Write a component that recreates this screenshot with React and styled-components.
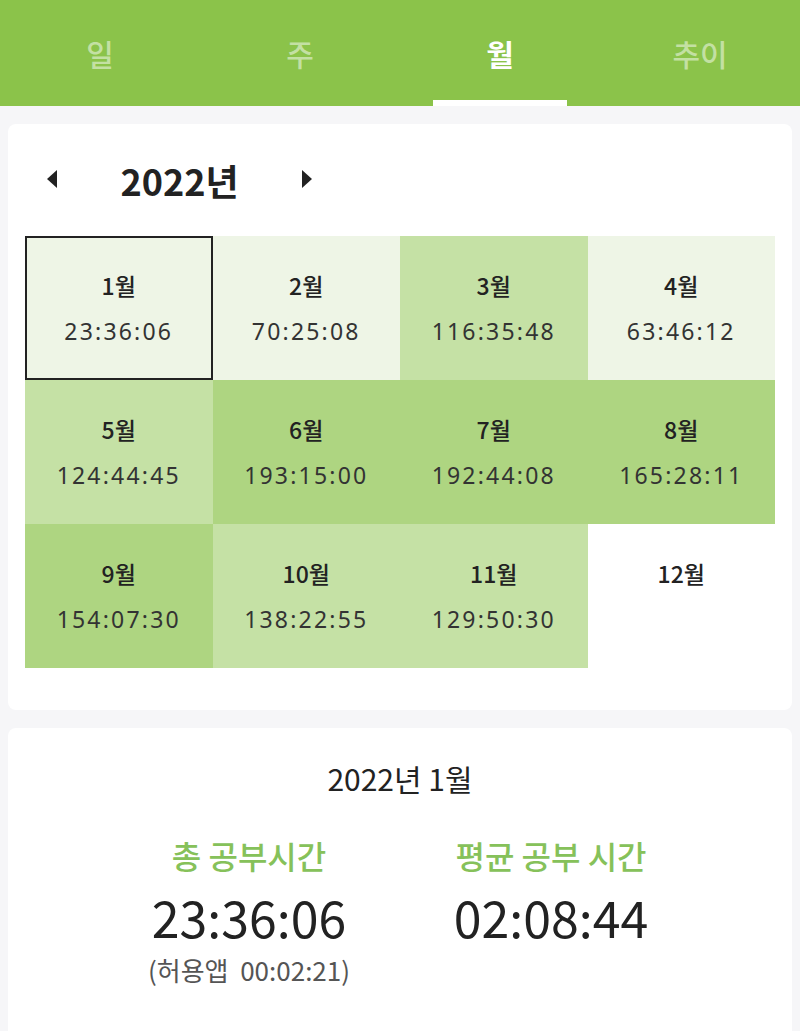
import React from 'react';
import styled, { createGlobalStyle } from 'styled-components';

const GlobalStyle = createGlobalStyle`
	body {
		margin: 0;
		background: #f6f6f8;
		font-family: "Noto Sans", "Noto Sans CJK KR", sans-serif;
		color: #222;
	}
`;

const Header = styled.div`
	display: flex;
	height: 106px;
	background: #8bc34a;
`;

const Tab = styled.div`
	flex: 1;
	display: flex;
	flex-direction: column;
	align-items: center;
`;

const TabLabel = styled.div`
	flex: 1;
	display: flex;
	align-items: center;
	padding-top: 6px;
	font-family: "Noto Sans CJK KR", sans-serif;
	font-size: 30px;
	font-weight: ${p => (p.active ? 700 : 500)};
	color: ${p => (p.active ? '#ffffff' : '#c3e0a3')};
`;

const Indicator = styled.div`
	width: 134px;
	height: 6px;
	background: ${p => (p.active ? '#ffffff' : 'transparent')};
`;

const Content = styled.div`
	padding: 18px 8px 0;
	display: flex;
	flex-direction: column;
	gap: 18px;
`;

const Card = styled.div`
	background: #fff;
	border-radius: 8px;
	padding: ${p => p.pad};
`;

const YearNav = styled.div`
	display: flex;
	align-items: center;
	height: 46px;
	padding-left: 22px;
	margin-bottom: 34px;
`;

const Arrow = styled.div`
	width: 0;
	height: 0;
	border-top: 9px solid transparent;
	border-bottom: 9px solid transparent;
	${p => (p.dir === 'left'
		? 'border-right: 10px solid #222;'
		: 'border-left: 10px solid #222;')}
`;

const YearLabel = styled.div`
	width: 245px;
	text-align: center;
	font-family: "Noto Sans CJK KR", sans-serif;
	font-size: 36px;
	font-weight: 700;
	line-height: 46px;
	margin-top: 2px;
	color: #222;
`;

const Grid = styled.div`
	display: grid;
	grid-template-columns: repeat(4, 1fr);
	grid-auto-rows: 144px;
`;

const Cell = styled.div`
	box-sizing: border-box;
	display: flex;
	flex-direction: column;
	align-items: center;
	padding-top: ${p => (p.selected ? '33px' : '35px')};
	background: ${p => p.bg};
	border: ${p => (p.selected ? '2px solid #222' : 'none')};
`;

const MonthName = styled.div`
	font-family: "Noto Sans CJK KR", sans-serif;
	font-size: 23px;
	font-weight: 500;
	line-height: 28px;
	color: #222;
`;

const MonthTime = styled.div`
	margin-top: 18px;
	font-size: 23px;
	line-height: 28px;
	letter-spacing: 2.2px;
	color: #333;
`;

const Title = styled.div`
	text-align: center;
	font-family: "Noto Sans CJK KR", sans-serif;
	font-size: 30px;
	font-weight: 400;
	line-height: 40px;
	color: #222;
	margin-bottom: 36px;
`;

const Stats = styled.div`
	display: flex;
	justify-content: center;
	gap: 100px;
`;

const Stat = styled.div`
	display: flex;
	flex-direction: column;
	align-items: center;
	width: 202px;
`;

const StatLabel = styled.div`
	font-family: "Noto Sans CJK KR", sans-serif;
	font-size: 32px;
	font-weight: 500;
	line-height: 42px;
	color: #86c15a;
`;

const StatValue = styled.div`
	font-family: "Noto Sans CJK KR", sans-serif;
	font-size: 50px;
	line-height: 68px;
	margin-top: 6px;
	color: #222;
`;

const StatSub = styled.div`
	font-family: "Noto Sans CJK KR", sans-serif;
	font-size: 26px;
	line-height: 36px;
	margin-top: 2px;
	color: #555;
	white-space: pre;
`;

const tabs = ['일', '주', '월', '추이'];

const LIGHT = '#eef5e6';
const MID = '#c5e1a5';
const DARK = '#aed581';

const months = [
	{ name: '1월', time: '23:36:06', bg: LIGHT, selected: true },
	{ name: '2월', time: '70:25:08', bg: LIGHT },
	{ name: '3월', time: '116:35:48', bg: MID },
	{ name: '4월', time: '63:46:12', bg: LIGHT },
	{ name: '5월', time: '124:44:45', bg: MID },
	{ name: '6월', time: '193:15:00', bg: DARK },
	{ name: '7월', time: '192:44:08', bg: DARK },
	{ name: '8월', time: '165:28:11', bg: DARK },
	{ name: '9월', time: '154:07:30', bg: DARK },
	{ name: '10월', time: '138:22:55', bg: MID },
	{ name: '11월', time: '129:50:30', bg: MID },
	{ name: '12월', time: '', bg: '#fff' },
];

export default function App() {
	return (
		<>
			<GlobalStyle />
			<Header>
				{tabs.map(t => (
					<Tab key={t}>
						<TabLabel active={t === '월'}>{t}</TabLabel>
						<Indicator active={t === '월'} />
					</Tab>
				))}
			</Header>
			<Content>
				<Card pad="32px 17px 42px">
					<YearNav>
						<Arrow dir="left" />
						<YearLabel>2022년</YearLabel>
						<Arrow dir="right" />
					</YearNav>
					<Grid>
						{months.map(m => (
							<Cell key={m.name} bg={m.bg} selected={m.selected}>
								<MonthName>{m.name}</MonthName>
								{m.time && <MonthTime>{m.time}</MonthTime>}
							</Cell>
						))}
					</Grid>
				</Card>
				<Card pad="30px 17px 60px">
					<Title>2022년 1월</Title>
					<Stats>
						<Stat>
							<StatLabel>총 공부시간</StatLabel>
							<StatValue>23:36:06</StatValue>
							<StatSub>(허용앱  00:02:21)</StatSub>
						</Stat>
						<Stat>
							<StatLabel>평균 공부 시간</StatLabel>
							<StatValue>02:08:44</StatValue>
						</Stat>
					</Stats>
				</Card>
			</Content>
		</>
	);
}
